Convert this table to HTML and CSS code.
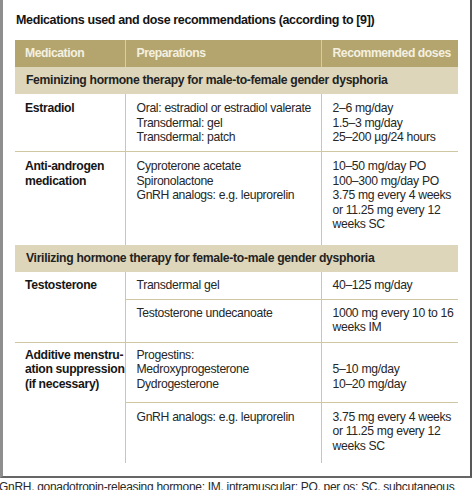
FILE: index.html
```html
<!DOCTYPE html>
<html>
<head>
<meta charset="utf-8">
<link rel="stylesheet" href="styles.css">
</head>
<body>
<div class="frame">
  <div class="title">Medications used and dose recommendations (according to [9])</div>
  <table class="med">
    <colgroup><col class="c1"><col class="c2"><col class="c3"></colgroup>
    <thead>
      <tr class="head"><th>Medication</th><th>Preparations</th><th>Recommended doses</th></tr>
    </thead>
    <tbody>
      <tr class="section"><td colspan="3">Feminizing hormone therapy for male-to-female gender dysphoria</td></tr>
      <tr class="row r-estradiol">
        <td class="name">Estradiol</td>
        <td>Oral: estradiol or estradiol valerate<br>Transdermal: gel<br>Transdermal: patch</td>
        <td>2–6 mg/day<br>1.5–3 mg/day<br>25–200 µg/24 hours</td>
      </tr>
      <tr class="row r-anti">
        <td class="name">Anti-androgen<br>medication</td>
        <td>Cyproterone acetate<br>Spironolactone<br>GnRH analogs: e.g. leuprorelin</td>
        <td>10–50 mg/day PO<br>100–300 mg/day PO<br>3.75 mg every 4 weeks<br>or 11.25 mg every 12<br>weeks SC</td>
      </tr>
      <tr class="section"><td colspan="3">Virilizing hormone therapy for female-to-male gender dysphoria</td></tr>
      <tr class="row r-gel">
        <td class="name" rowspan="2">Testosterone</td>
        <td>Transdermal gel</td>
        <td>40–125 mg/day</td>
      </tr>
      <tr class="row sub r-undec">
        <td>Testosterone undecanoate</td>
        <td>1000 mg every 10 to 16<br>weeks IM</td>
      </tr>
      <tr class="row r-add">
        <td class="name" rowspan="2">Additive menstru-<br>ation suppression<br>(if necessary)</td>
        <td>Progestins:<br>Medroxyprogesterone<br>Dydrogesterone</td>
        <td><br>5–10 mg/day<br>10–20 mg/day</td>
      </tr>
      <tr class="row sub r-gnrh">
        <td>GnRH analogs: e.g. leuprorelin</td>
        <td>3.75 mg every 4 weeks<br>or 11.25 mg every 12<br>weeks SC</td>
      </tr>
    </tbody>
  </table>
</div>
<div class="footnote">GnRH, gonadotropin-releasing hormone; IM, intramuscular; PO, per os; SC, subcutaneous</div>
</body>
</html>
```

FILE: styles.css
```css
html, body {
  margin: 0;
  padding: 0;
  background: #ffffff;
}
body {
  width: 474px;
  height: 490px;
  overflow: hidden;
  font-family: "Liberation Sans", Arial, Helvetica, sans-serif;
  color: #1e1e1e;
}
.frame {
  width: 443px;
  padding: 12px 12px 13px 12px;
  border-left: 3px solid #8e8e8e;
  border-right: 2px solid #585858;
  border-bottom: 2px solid #666666;
}
.title {
  font-weight: bold;
  font-size: 12.5px;
  letter-spacing: -0.36px;
  line-height: 16px;
  margin: 0 0 12px 1px;
  color: #141414;
}
.med {
  width: 443px;
  table-layout: fixed;
  border-collapse: collapse;
  font-size: 12.2px;
  letter-spacing: -0.32px;
  line-height: 14.6px;
}
.c1 { width: 110px; }
.c2 { width: 196px; }
.c3 { width: 137px; }
.med th, .med td {
  padding: 6px 4px 6px 11px;
  text-align: left;
  vertical-align: top;
  white-space: nowrap;
  overflow: visible;
}
.head th {
  background: #b3a56d;
  color: #f4f0e1;
  font-weight: bold;
  letter-spacing: -0.45px;
  height: 15px;
  border-left: 1px solid #d6cda8;
}
.head th:first-child {
  border-left: none;
  padding-left: 10px;
}
.section td {
  background: #ddd6ba;
  font-weight: bold;
  color: #222;
  padding-left: 11px;
  height: 15px;
}
.row td {
  border-top: 1px solid #cfc6a2;
  border-left: 1px solid #cfc6a2;
  color: #262626;
}
.row td.name {
  border-left: none;
  font-weight: bold;
  color: #161616;
  padding-left: 10px;
}
.section + .row td { border-top: none; }
.r-estradiol td { height: 44px; padding-top: 7px; }
.r-anti td { height: 80px; padding-top: 7px; }
.r-gel td { height: 14px; }
.r-undec td { height: 30px; }
.r-add td { height: 48px; padding-top: 5px; }
.r-gnrh td { height: 47px; padding-top: 7px; }
.footnote {
  margin: 2px 0 0 -1px;
  font-size: 12px;
  line-height: 14px;
  letter-spacing: -0.3px;
  color: #2a2a2a;
  white-space: nowrap;
}
```
